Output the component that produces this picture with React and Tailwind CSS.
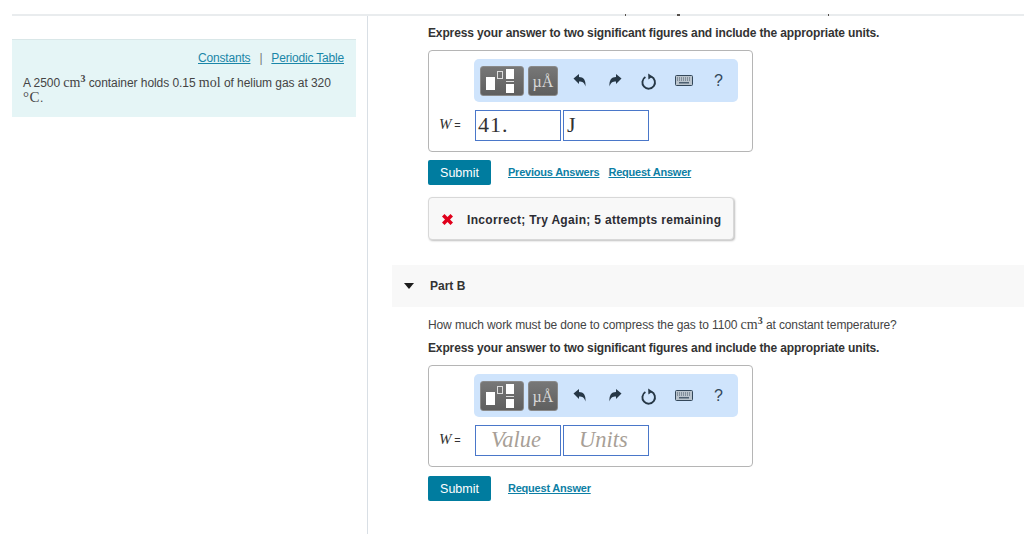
function Toolbar() {
  return (
    <div className="ml-[45px] w-[264px] h-[43px] bg-[#cfe4fc] rounded-[5px] flex items-center pl-[6px]">
      <div className="w-[44px] h-[30px] rounded-[3px] bg-gradient-to-b from-[#777777] to-[#5f5f5f] border border-[#8a8a8a] relative shrink-0">
        <svg width="44" height="30" viewBox="0 0 44 30" className="absolute -left-px -top-px">
          <rect x="6" y="11" width="9" height="13" fill="#fff" />
          <rect x="17.5" y="5.5" width="5" height="7" fill="none" stroke="#ddd" strokeWidth="1" />
          <rect x="26" y="3" width="8" height="10" fill="#fff" />
          <rect x="26" y="15" width="8" height="1" fill="#ddd" />
          <rect x="26" y="18" width="8" height="9" fill="#fff" />
        </svg>
      </div>
      <div className="ml-[4px] w-[30px] h-[30px] rounded-[3px] bg-gradient-to-b from-[#777777] to-[#5f5f5f] border border-[#8a8a8a] flex items-center justify-center shrink-0 text-[#d8d8d8] text-[16px] font-['Liberation_Serif',serif] pt-[3px]">
        µÅ
      </div>
      <svg width="14" height="13" viewBox="0 0 14 13" className="ml-[15px] shrink-0">
        <path d="M0.5 4.5 L6 0 V3 C10.5 3 13 6 12.5 12.5 C11.5 8.8 9.5 7.5 6 7.5 V10 Z" fill="#263746" />
      </svg>
      <svg width="14" height="13" viewBox="0 0 14 13" className="ml-[21px] shrink-0">
        <path d="M13.5 4.5 L8 0 V3 C3.5 3 1 6 1.5 12.5 C2.5 8.8 4.5 7.5 8 7.5 V10 Z" fill="#263746" />
      </svg>
      <svg width="16" height="17" viewBox="0 0 16 17" className="ml-[19px] mt-[2px] shrink-0">
        <path d="M10.2 3.6 A6.3 6.3 0 1 1 4.4 4" fill="none" stroke="#263746" strokeWidth="1.9" />
        <path d="M7.2 0.5 L11.6 3.6 L7.4 6.6 Z" fill="#263746" />
      </svg>
      <svg width="18" height="11" viewBox="0 0 18 11" className="ml-[18px] shrink-0">
        <rect x="0.5" y="0.5" width="17" height="10" rx="1" fill="#b9c3cc" stroke="#33475a" />
        <path d="M2 3h14M2 5h14" stroke="#4a5b6b" strokeWidth="1" strokeDasharray="1 1" />
        <path d="M4 7.8h10" stroke="#33475a" strokeWidth="1.2" />
      </svg>
      <span className="ml-[21px] text-[16px] text-[#33475a] leading-none">?</span>
    </div>
  );
}

function Inputs({ first, second, placeholder }) {
  const box = "w-[86px] h-[31px] border border-[#4a77c9] bg-white font-['Liberation_Serif',serif] flex items-center";
  return (
    <div className="flex items-center mt-[8px]">
      <div className="w-[46px] pl-[10px] pb-[2px] text-[11px] text-[#333] font-['Liberation_Serif',serif] shrink-0 whitespace-nowrap">
        <i className="text-[15px]">W</i> <span className="font-['Liberation_Sans',sans-serif]">=</span>
      </div>
      <div className={`${box} ${placeholder ? "pl-[15px] pb-[1px] italic text-[22.5px] text-[#a89f97]" : "pl-[2px] pb-[3px] text-[22px] text-[#333] tracking-[1px]"}`}>{first}</div>
      <div className={`${box} ml-[2px] ${placeholder ? "pl-[15px] pb-[1px] italic text-[22.5px] text-[#a89f97]" : "pl-[3px] pb-[3px] text-[22px] text-[#333]"}`}>{second}</div>
    </div>
  );
}

function AnswerBox({ first, second, placeholder }) {
  return (
    <div className="w-[325px] h-[102px] border border-[#b5b5b5] rounded-[4px] bg-white pt-[8px]">
      <Toolbar />
      <Inputs first={first} second={second} placeholder={placeholder} />
    </div>
  );
}

function Cm3() {
  return (
    <span className="font-['Liberation_Serif',serif] text-[14px] tracking-normal">
      cm<sup className="font-bold text-[10px] -top-[5px]">3</sup>
    </span>
  );
}

function Submit() {
  return (
    <div className="w-[63px] h-[25px] pt-[1px] bg-[#007c9f] rounded-[2px] text-white text-[12.5px] flex items-center justify-center">
      Submit
    </div>
  );
}

function Link({ children }) {
  return <span className="text-[#0d7fa5] underline text-[11px] font-bold tracking-[-0.22px]">{children}</span>;
}

function Tick({ className }) {
  return <span className={`absolute top-[14px] h-[2px] bg-[#55504c] ${className}`} />;
}

export default function App() {
  return (
    <div className="relative w-[1024px] h-[534px] bg-white overflow-hidden pt-[14px] pl-[12px] font-['Liberation_Sans',sans-serif] text-[#333]">
      <Tick className="left-[625px] w-[1px]" />
      <Tick className="left-[677px] w-[3px]" />
      <Tick className="left-[828px] w-[1px]" />
      <div className="border-t-2 border-[#e9ecee] flex h-[520px]">
        <div className="w-[356px] shrink-0 border-r border-[#d9dfe5] pt-[23px]">
          <div className="w-[344px] h-[78px] bg-[#e5f5f6] border-t border-[#d9e7e8] px-[11px] pt-[11px]">
            <div className="text-right pr-[1px] text-[12px] text-[#1a86a8] leading-[14px] tracking-[-0.18px]">
              <span className="underline">Constants</span>
              <span className="text-[#777] mx-[9px]">|</span>
              <span className="underline">Periodic Table</span>
            </div>
            <div className="mt-[11px] text-[12px] leading-[13px] text-[#444] whitespace-nowrap tracking-[-0.06px]">
              A 2500 <Cm3 /> container holds 0.15 <span className="font-['Liberation_Serif',serif] text-[14px] tracking-normal">mol</span> of helium gas at 320
              <br />
              <span className="inline-block pt-[1px] font-['Liberation_Serif',serif] text-[15px] tracking-[0.5px]">°C</span>.
            </div>
          </div>
        </div>
        <div className="flex-1 min-w-0">
          <div className="pl-[60px] pt-[10px]">
            <p className="text-[12px] font-bold leading-[14px] text-[#333] tracking-[-0.134px]">
              Express your answer to two significant figures and include the appropriate units.
            </p>
            <div className="mt-[10px]">
              <AnswerBox first="41." second="J" />
            </div>
            <div className="flex items-start mt-[8px]">
              <Submit />
              <div className="ml-[17px] mt-[5px] flex gap-[9px] leading-[14px]">
                <Link>Previous Answers</Link>
                <Link>Request Answer</Link>
              </div>
            </div>
            <div className="mt-[12px] w-[306px] h-[43px] border border-[#d8d8d8] rounded-[4px] bg-[#f8f8f8] shadow-[1px_1px_2px_rgba(0,0,0,0.25)] flex items-center pl-[12px] pt-[2px]">
              <svg width="13" height="13" viewBox="0 0 13 13">
                <path d="M1 3.5 L3.5 1 L6.5 4 L9.5 1 L12 3.5 L9 6.5 L12 9.5 L9.5 12 L6.5 9 L3.5 12 L1 9.5 L4 6.5 Z" fill="#e0001b" />
              </svg>
              <span className="ml-[13px] text-[12px] font-bold text-[#2c2c33] tracking-[0.32px] whitespace-nowrap">
                Incorrect; Try Again; 5 attempts remaining
              </span>
            </div>
          </div>
          <div className="mt-[25px] ml-[24px] h-[42px] bg-[#f8f8f8] flex items-center pl-[12px]">
            <svg width="10" height="6" viewBox="0 0 10 6"><path d="M0 0 H10 L5 6 Z" fill="#1c1c1c" /></svg>
            <span className="ml-[16px] text-[12px] font-bold text-[#333]">Part B</span>
          </div>
          <div className="pl-[60px] pt-[10px]">
            <p className="text-[12px] leading-[16px] text-[#444] whitespace-nowrap tracking-[-0.11px]">
              How much work must be done to compress the gas to 1100 <Cm3 /> at constant temperature?
            </p>
            <p className="mt-[8px] text-[12px] font-bold leading-[14px] text-[#333] tracking-[-0.134px]">
              Express your answer to two significant figures and include the appropriate units.
            </p>
            <div className="mt-[10px]">
              <AnswerBox first="Value" second="Units" placeholder />
            </div>
            <div className="flex items-start mt-[9px]">
              <Submit />
              <div className="ml-[17px] mt-[4px] leading-[14px]">
                <Link>Request Answer</Link>
              </div>
            </div>
          </div>
        </div>
      </div>
    </div>
  );
}
